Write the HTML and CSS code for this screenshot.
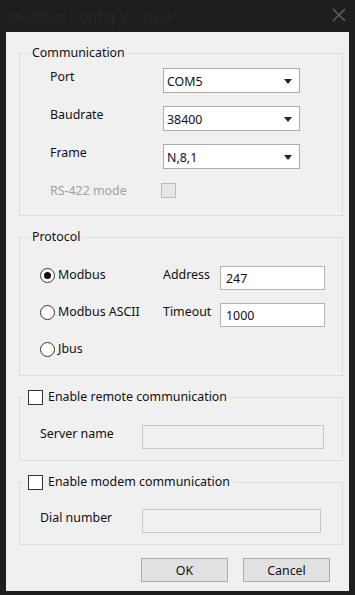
FILE: index.html
```html
<!DOCTYPE html>
<html lang="en">

<head>
  <meta charset="UTF-8" />
  <meta name="viewport" content="width=device-width, initial-scale=1.0" />
  <title>Modbus Config</title>
  <link rel="stylesheet" href="styles.css">
</head>

<body>
  <div class="window">
    <div class="titlebar">
      <span class="title">Modbus Config V1.10.0</span>
      <svg class="close" width="14" height="14" viewBox="0 0 14 14">
        <path d="M1 1 L13 13 M13 1 L1 13" stroke="#666" stroke-width="1.3" fill="none" />
      </svg>
    </div>

    <div class="client">
      <fieldset class="group">
        <legend>Communication</legend>
        <div class="comm-grid">
          <span class="lbl">Port</span>
          <div class="combo"><span>COM5</span><i class="arrow"></i></div>
          <span class="lbl">Baudrate</span>
          <div class="combo"><span>38400</span><i class="arrow"></i></div>
          <span class="lbl">Frame</span>
          <div class="combo"><span>N,8,1</span><i class="arrow"></i></div>
          <span class="lbl disabled">RS-422 mode</span>
          <span class="check check-disabled"></span>
        </div>
      </fieldset>

      <fieldset class="group">
        <legend>Protocol</legend>
        <div class="proto-grid">
          <label class="radio-row"><span class="radio checked"></span>Modbus</label>
          <span class="lbl-tight">Address</span>
          <div class="edit">247</div>
          <label class="radio-row"><span class="radio"></span>Modbus ASCII</label>
          <span class="lbl-tight">Timeout</span>
          <div class="edit">1000</div>
          <label class="radio-row"><span class="radio"></span>Jbus</label>
        </div>
      </fieldset>

      <fieldset class="group">
        <legend class="legend-check"><span class="check"></span>Enable remote communication</legend>
        <div class="opt-row">
          <span class="lbl">Server name</span>
          <div class="edit edit-off wide"></div>
        </div>
      </fieldset>

      <fieldset class="group">
        <legend class="legend-check"><span class="check"></span>Enable modem communication</legend>
        <div class="opt-row">
          <span class="lbl">Dial number</span>
          <div class="edit edit-off narrow"></div>
        </div>
      </fieldset>

      <div class="buttons">
        <button class="btn">OK</button>
        <button class="btn">Cancel</button>
      </div>
    </div>
  </div>
</body>

</html>
```

FILE: styles.css
```css
body {
  margin: 0;
  padding: 0;
  background: #1e1e1e;
  font-family: "Noto Sans", "DejaVu Sans", sans-serif;
  font-size: 12.4px;
  color: #111;
}

.window {
  width: 355px;
  height: 595px;
  background: #1e1e1e;
}

.titlebar {
  height: 32px;
  display: flex;
  align-items: center;
  justify-content: space-between;
  padding: 0 9px 0 8px;
  box-sizing: border-box;
}

.title {
  color: #272727;
  font-size: 15px;
}

.close {
  margin-top: -3px;
}

.client {
  margin: 0 6px 0 6px;
  height: 559px;
  background: #f0f0f0;
  padding: 13px 6px 0 13px;
  box-sizing: border-box;
}

.group {
  margin: 0 0 13px 0;
  padding: 0;
  border: 1px solid #dcdcdc;
  min-width: 0;
}

legend {
  margin-left: 9px;
  padding: 0 3px;
  line-height: 16px;
  height: 16px;
}

.legend-check {
  margin-left: 5px;
  display: flex;
  align-items: center;
  gap: 5px;
}

.lbl, .lbl-tight {
  line-height: 16px;
  margin-top: 1px;
}

.lbl.disabled {
  color: #a0a0a0;
}

/* communication */
.comm-grid {
  display: grid;
  grid-template-columns: 113px 137px;
  grid-template-rows: 25px 25px 25px 16px;
  row-gap: 13px;
  padding: 7px 0 17px 30px;
  align-items: start;
}

.combo {
  height: 25px;
  box-sizing: border-box;
  border: 1px solid #acacac;
  background: #fff;
  display: flex;
  align-items: center;
  justify-content: space-between;
  padding: 2px 7px 0 3px;
}

.arrow {
  width: 0;
  height: 0;
  border-left: 4px solid transparent;
  border-right: 4px solid transparent;
  border-top: 5px solid #1c1f5a;
}

.check {
  width: 15px;
  height: 15px;
  box-sizing: border-box;
  border: 1px solid #333;
  background: #fff;
  display: inline-block;
}

.check-disabled {
  border-color: #bcbcbc;
  background: #e6e6e6;
  margin: 1px 0 0 -2px;
}

/* protocol */
.proto-grid {
  display: grid;
  grid-template-columns: 123px 57px 105px;
  grid-auto-rows: 24px;
  row-gap: 13px;
  padding: 21px 0 11px 20px;
  align-items: start;
}

.radio-row {
  display: flex;
  align-items: center;
  gap: 3px;
  line-height: 16px;
  margin-top: 1px;
  grid-column: 1;
}

.radio {
  width: 15px;
  height: 15px;
  box-sizing: border-box;
  border: 1px solid #333;
  border-radius: 50%;
  background: #fff;
  position: relative;
}

.radio.checked::after {
  content: "";
  position: absolute;
  left: 3px;
  top: 3px;
  width: 7px;
  height: 7px;
  border-radius: 50%;
  background: #111;
}

.edit {
  height: 24px;
  box-sizing: border-box;
  border: 1px solid #b4b4b4;
  background: #fff;
  padding: 3px 0 0 5px;
}

.edit-off {
  background: #f0f0f0;
  border-color: #c8c8c8;
}

/* remote / modem */
.opt-row {
  display: grid;
  grid-template-columns: 102px auto;
  align-items: start;
  padding: 20px 0 11px 20px;
}

.group:nth-of-type(4) .opt-row {
  padding-top: 19px;
}

.wide {
  width: 182px;
}

.narrow {
  width: 179px;
}

.buttons {
  display: flex;
  justify-content: flex-end;
  gap: 15px;
  padding-right: 13px;
}

.btn {
  width: 87px;
  height: 24px;
  font: inherit;
  color: #111;
  background: #e1e1e1;
  border: 1px solid #adadad;
  padding: 0;
}
```
